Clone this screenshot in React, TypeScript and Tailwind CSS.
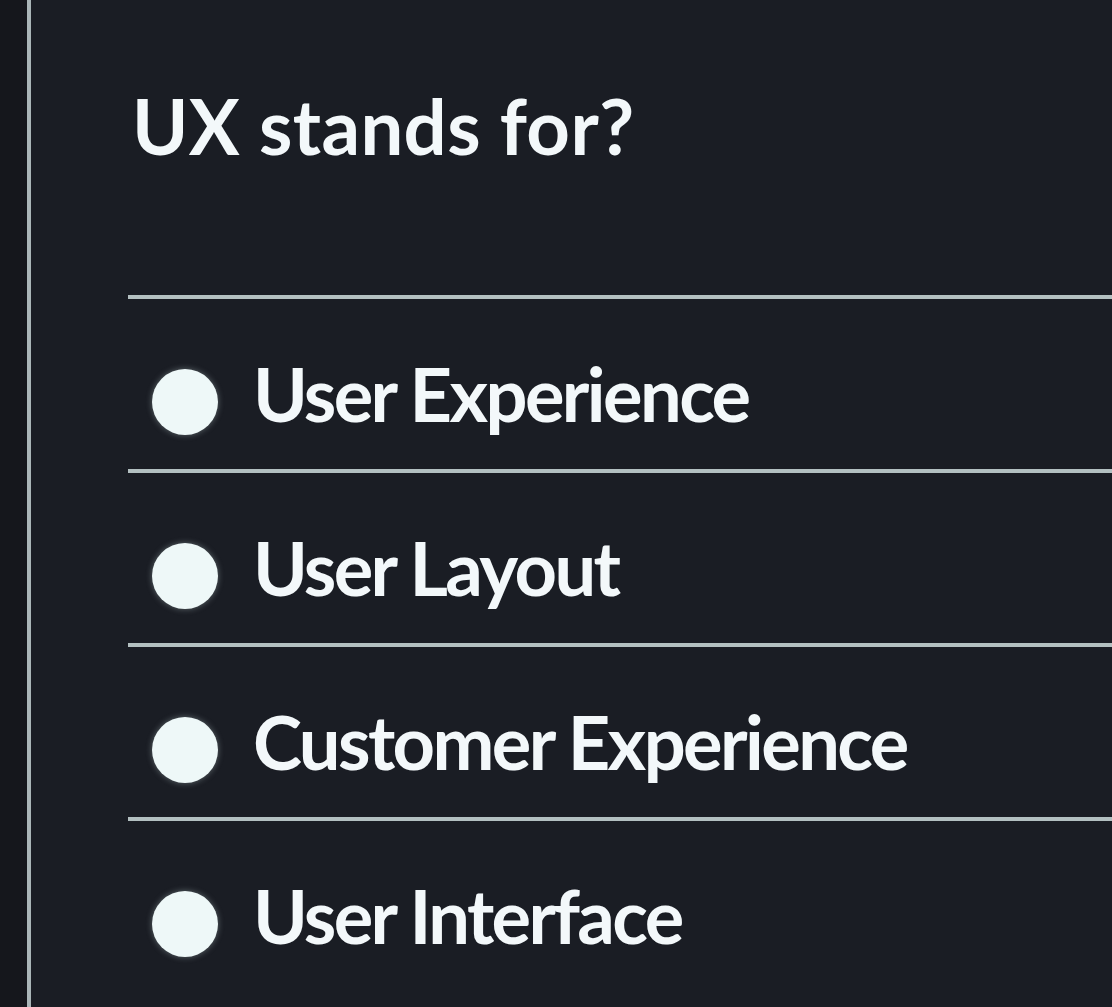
const options = ['User Experience', 'User Layout', 'Customer Experience', 'User Interface'];

export default function App() {
  return (
    <div
      className="flex h-[1007px] w-[1112px] overflow-hidden bg-[#1a1d24] text-[#f3f8fa]"
      style={{ fontFamily: 'Lato, "Open Sans", sans-serif' }}
    >
      {/* left edge of the panel */}
      <div className="w-[27px] shrink-0 bg-[#15171c]" />
      <div className="w-[4px] shrink-0 bg-[#aab6b8]" />

      <div className="flex-1 pl-[97px]">
        <h1 className="pt-[88px] pl-[4px] text-[76px] font-bold leading-none tracking-[0.005em]">
          UX stands for?
        </h1>

        <div className="mt-[131px]">
          {options.map((opt) => (
            <label
              key={opt}
              className="flex h-[174px] items-center gap-[35px] border-t-4 border-[#b3c0c1] pt-[36px] pl-[24px]"
            >
              <span className="h-[66px] w-[66px] shrink-0 rounded-full bg-[#eef8f8] shadow-[0_0_6px_rgba(220,240,240,0.35)]" />
              <span className="mb-[16px] text-[74px] font-bold leading-none tracking-[-0.035em]">
                {opt}
              </span>
            </label>
          ))}
        </div>
      </div>
    </div>
  );
}
